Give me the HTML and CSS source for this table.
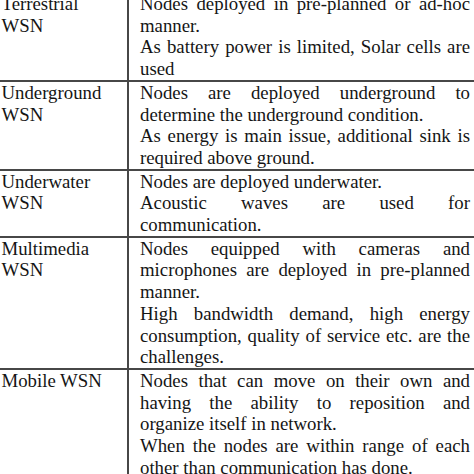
FILE: index.html
```html
<!DOCTYPE html>
<html lang="en">
<head>
<meta charset="utf-8">
<title>Types of WSN</title>
<link rel="stylesheet" href="styles.css">
</head>
<body>
<div class="wsn-table">
  <div class="cell type">Terrestrial WSN</div>
  <div class="cell desc">
    <p>Nodes deployed in pre-planned or ad-hoc manner.</p>
    <p>As battery power is limited, Solar cells are used</p>
  </div>

  <div class="cell type">Underground WSN</div>
  <div class="cell desc">
    <p>Nodes are deployed underground to determine the underground condition.</p>
    <p>As energy is main issue, additional sink is required above ground.</p>
  </div>

  <div class="cell type">Underwater WSN</div>
  <div class="cell desc">
    <p>Nodes are deployed underwater.</p>
    <p>Acoustic waves are used for communication.</p>
  </div>

  <div class="cell type">Multimedia WSN</div>
  <div class="cell desc">
    <p>Nodes equipped with cameras and microphones are deployed in pre-planned manner.</p>
    <p>High bandwidth demand, high energy consumption, quality of service etc. are the challenges.</p>
  </div>

  <div class="cell type">Mobile WSN</div>
  <div class="cell desc">
    <p>Nodes that can move on their own and having the ability to reposition and organize itself in network.</p>
    <p>When the nodes are within range of each other than communication has done.</p>
  </div>
</div>
</body>
</html>
```
FILE: styles.css
```css
html, body {
  margin: 0;
  padding: 0;
  overflow: hidden;
  background: #ffffff;
}

.wsn-table {
  display: grid;
  grid-template-columns: 127px 352px;
  gap: 2px;
  width: max-content;
  margin-top: -7px;
  background: #474747;
  font-family: "Liberation Serif", "Times New Roman", serif;
  font-size: 18.8px;
  line-height: 21.7px;
  color: #151515;
}

.cell {
  background: #ffffff;
}

.type {
  padding: 0 11px 0 1.5px;
}

.desc {
  padding: 0 11px;
  width: 330px;
}

.desc p {
  margin: 0;
  text-align: justify;
}
```
